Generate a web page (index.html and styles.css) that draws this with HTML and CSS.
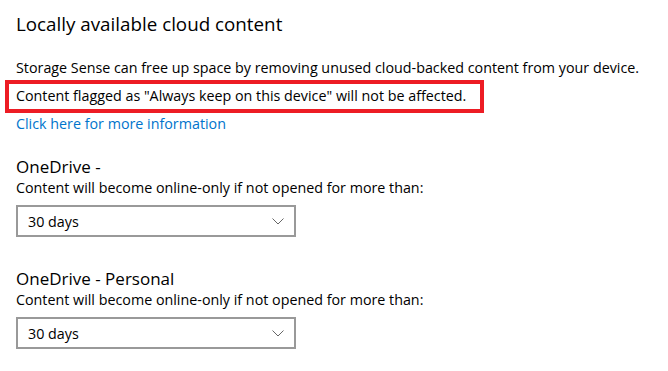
FILE: index.html
```html
<!DOCTYPE html>
<html>
<head>
<meta charset="utf-8">
<link rel="stylesheet" href="styles.css">
</head>
<body>
<div class="page">
  <h1 class="title">Locally available cloud content</h1>
  <p class="text intro">Storage Sense can free up space by removing unused cloud-backed content from your device.</p>
  <div class="highlight"><p class="text">Content flagged as "Always keep on this device" will not be affected.</p></div>
  <a class="link" href="#">Click here for more information</a>

  <section class="group">
    <h2 class="sub">OneDrive -</h2>
    <p class="text">Content will become online-only if not opened for more than:</p>
    <div class="select"><span>30 days</span>
      <svg class="chev" width="12" height="7" viewBox="0 0 12 7"><path d="M0.5 0.5 L6 6 L11.5 0.5" fill="none" stroke="#666" stroke-width="1"/></svg>
    </div>
  </section>

  <section class="group">
    <h2 class="sub">OneDrive - Personal</h2>
    <p class="text">Content will become online-only if not opened for more than:</p>
    <div class="select"><span>30 days</span>
      <svg class="chev" width="12" height="7" viewBox="0 0 12 7"><path d="M0.5 0.5 L6 6 L11.5 0.5" fill="none" stroke="#666" stroke-width="1"/></svg>
    </div>
  </section>
</div>
</body>
</html>
```
FILE: styles.css
```css
html, body {
  margin: 0;
  padding: 0;
  background: #fff;
}
body {
  font-family: "Open Sans", "Noto Sans", sans-serif;
  color: #000;
  width: 668px;
  height: 371px;
  overflow: hidden;
}
.page {
  padding: 10px 0 0 16px;
}
.title {
  margin: 0;
  font-size: 18.8px;
  font-weight: 400;
  line-height: 28px;
}
.text {
  margin: 0;
  font-size: 14.3px;
  line-height: 20px;
}
.intro {
  margin-top: 20px;
}
.highlight {
  margin: 2px 0 0 -11px;
  width: 464px;
  border: 4px solid #ed1c24;
  padding: 2px 0 3px 7px;
}
.link {
  display: block;
  margin-top: 1px;
  font-size: 14.3px;
  line-height: 20px;
  color: #0074cc;
  text-decoration: none;
}
.group {
  margin-top: 22px;
}
.group + .group {
  margin-top: 31px;
}
.sub {
  margin: 0;
  font-size: 17px;
  font-weight: 400;
  line-height: 22px;
}
.select {
  margin-top: 7px;
  height: 28px;
  border: 2px solid #999;
  display: flex;
  align-items: center;
  justify-content: space-between;
  padding: 0 0 0 10px;
  box-sizing: content-box;
  font-size: 14.3px;
  width: 266px;
}
.chev {
  margin-right: 10px;
}
```
